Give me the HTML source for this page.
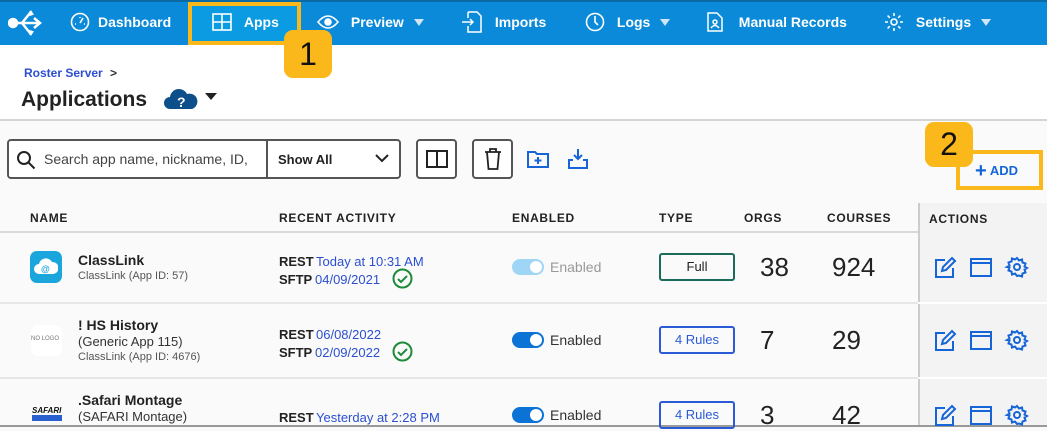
<!DOCTYPE html>
<html><head><meta charset="utf-8"><style>
*{margin:0;padding:0;box-sizing:border-box}
body{width:1047px;height:427px;overflow:hidden;background:#fafafa;font-family:"Liberation Sans",sans-serif;position:relative;color:#222}
.a{position:absolute}
.nav{left:0;top:0;width:1047px;height:45px;background:#0a8ad8;border-top:2px solid #0b6aa6}
.ni{position:absolute;top:11px;height:22px;color:#fff;font-weight:bold;font-size:14px;display:flex;align-items:center;gap:8px;line-height:22px}
.tri{display:inline-block;width:0;height:0;border-left:5px solid transparent;border-right:5px solid transparent;border-top:7px solid #cfe6f7;margin-left:2px}
.hdr{left:0;top:45px;width:1047px;height:76px;background:#fff;border-bottom:2px solid #d4d4d4}
.th{position:absolute;top:211px;font-size:12px;font-weight:bold;letter-spacing:.7px;color:#222}
.sep{position:absolute;left:0;width:918px;height:2px;background:#e6e6e6}
.nm{font-size:14px;font-weight:bold;color:#222}
.sub{font-size:11px;color:#555}
.lbl{font-size:13px;font-weight:bold;color:#222}
.dt{font-size:13px;color:#2b4fd0}
.tog{position:absolute;width:32px;height:16px;border-radius:8px;background:#0b72d6}
.tog:after{content:"";position:absolute;right:2px;top:2px;width:12px;height:12px;border-radius:50%;background:#fff}
.en{position:absolute;font-size:14px;color:#333}
.pill{position:absolute;width:76px;height:28px;border:2px solid #2b5ad6;border-radius:3px;font-size:13px;color:#2b5ad6;text-align:center;line-height:24px}
.num{position:absolute;font-size:26px;color:#222}
.badge{position:absolute;background:#fbb81b;border-radius:9px;font-size:32px;color:#111;text-align:center}
</style></head><body>
<div class="a nav"></div>
<svg class="a" style="left:8px;top:8px" width="36" height="30" viewBox="0 0 36 30" fill="none" stroke="#fff" stroke-width="2.5"><circle cx="5" cy="15" r="4" fill="#fff"/><path d="M8 15H32M26 10l6 5-6 5M14 15l8-10M14 15l8 10"/><path d="M22 3l2 3-3 1M22 27l2-3-3-1" /></svg>
<div class="a" style="left:188px;top:2px;width:113px;height:43px;border:4px solid #fbb81b;background:#0b9be2"></div>
<div class="ni" style="left:70px"><svg width="20" height="20" viewBox="0 0 20 20" fill="none" stroke="#fff" stroke-width="1.6"><circle cx="10" cy="10" r="8.5"/><path d="M10 11l3-5M5 12h1M14 12h1M10 5v1"/></svg>Dashboard</div>
<div class="ni" style="left:212px"><svg width="20" height="18" viewBox="0 0 20 18" fill="none" stroke="#fff" stroke-width="1.6"><rect x="1" y="1" width="18" height="16"/><path d="M10 1v16M1 9h18"/></svg>&nbsp;Apps</div>
<div class="ni" style="left:317px"><svg width="22" height="16" viewBox="0 0 22 16" fill="none" stroke="#fff" stroke-width="1.6"><path d="M1 8q10-12 20 0q-10 12-20 0z"/><circle cx="11" cy="8" r="3" fill="#fff"/></svg>&nbsp;Preview<span class="tri"></span></div>
<div class="ni" style="left:461px"><svg width="22" height="22" viewBox="0 0 22 22" fill="none" stroke="#fff" stroke-width="1.5"><path d="M7 1h9l4 4v16H7v-6M7 7V1M1 11h11M9 8l3 3-3 3"/></svg>&nbsp;Imports</div>
<div class="ni" style="left:585px"><svg width="20" height="20" viewBox="0 0 20 20" fill="none" stroke="#fff" stroke-width="1.6"><circle cx="10" cy="10" r="8.5"/><path d="M10 4v6l3 3"/></svg>&nbsp;Logs<span class="tri"></span></div>
<div class="ni" style="left:707px"><svg width="16" height="20" viewBox="0 0 16 20" fill="none" stroke="#fff" stroke-width="1.5"><path d="M1 1h9l5 5v13H1z"/><circle cx="8" cy="10" r="2"/><path d="M4 16q4-5 8 0"/></svg>&nbsp;&nbsp;Manual Records</div>
<div class="ni" style="left:884px"><svg width="20" height="20" viewBox="0 0 20 20" fill="none" stroke="#fff" stroke-width="1.6"><circle cx="10" cy="10" r="3"/><path d="M10 1v3M10 16v3M1 10h3M16 10h3M3.6 3.6l2.2 2.2M14.2 14.2l2.2 2.2M3.6 16.4l2.2-2.2M14.2 5.8l2.2-2.2"/></svg>&nbsp;Settings<span class="tri"></span></div>
<div class="a hdr"></div>
<div class="badge" style="left:284px;top:30px;width:48px;height:48px;line-height:48px">1</div>
<div class="a" style="left:24px;top:66px;font-size:12px;font-weight:bold;color:#2b4fd0">Roster Server <span style="color:#333;margin-left:4px">&gt;</span></div>
<div class="a" style="left:21px;top:88px;font-size:21px;font-weight:bold;color:#222">Applications</div>
<svg class="a" style="left:164px;top:87px" width="34" height="24" viewBox="0 0 34 24"><path d="M6 22a6 6 0 010-12 9 9 0 0117-3 7 7 0 015 15z" fill="#0d4f8a"/><text x="13" y="20" font-size="14" font-weight="bold" fill="#fff" font-family="Liberation Sans">?</text></svg>
<div class="a" style="left:205px;top:93px;width:0;height:0;border-left:6px solid transparent;border-right:6px solid transparent;border-top:7px solid #222"></div>
<div class="a" style="left:7px;top:139px;width:394px;height:40px;border:2px solid #555;border-radius:4px;background:#fff"></div>
<div class="a" style="left:266px;top:140px;width:2px;height:38px;background:#555"></div>
<svg class="a" style="left:16px;top:150px" width="20" height="20" viewBox="0 0 20 20" fill="none" stroke="#222" stroke-width="2"><circle cx="8" cy="8" r="6"/><path d="M12.5 12.5l6 6"/></svg>
<div class="a" style="left:44px;top:151px;font-size:14px;color:#444">Search app name, nickname, ID,</div>
<div class="a" style="left:278px;top:152px;font-size:13px;font-weight:bold;color:#222">Show All</div>
<svg class="a" style="left:375px;top:154px" width="14" height="9" viewBox="0 0 14 9" fill="none" stroke="#222" stroke-width="2"><path d="M1 1l6 6 6-6"/></svg>
<div class="a" style="left:416px;top:139px;width:41px;height:40px;border:2px solid #555;border-radius:4px;background:#fff"></div>
<svg class="a" style="left:426px;top:150px" width="22" height="18" viewBox="0 0 22 18" fill="none" stroke="#222" stroke-width="2"><rect x="1" y="1" width="20" height="16"/><path d="M11 1v16"/></svg>
<div class="a" style="left:472px;top:139px;width:41px;height:40px;border:2px solid #555;border-radius:4px;background:#fff"></div>
<svg class="a" style="left:484px;top:148px" width="18" height="22" viewBox="0 0 18 22" fill="none" stroke="#222" stroke-width="1.8"><path d="M1 4h16M6 4V1h6v3M3 4l1.5 17h9L15 4"/></svg>
<svg class="a" style="left:527px;top:150px" width="22" height="18" viewBox="0 0 22 18" fill="none" stroke="#1565d8" stroke-width="2"><path d="M1 2h7l2 2h11v13H1z"/><path d="M11 7v7M7.5 10.5h7"/></svg>
<svg class="a" style="left:567px;top:148px" width="22" height="22" viewBox="0 0 22 22" fill="none" stroke="#1565d8" stroke-width="2"><path d="M11 1v10M7 7l4 4 4-4M6 12H2v8h18v-8h-4"/></svg>
<div class="a" style="left:956px;top:150px;width:87px;height:40px;border:4px solid #fbb81b"></div>
<div class="a" style="left:975px;top:160px;font-size:13px;font-weight:bold;color:#1565d8"><span style="font-size:20px;vertical-align:-2px">+</span> ADD</div>
<div class="badge" style="left:925px;top:122px;width:48px;height:45px;line-height:45px">2</div>
<div class="a" style="left:918px;top:203px;width:129px;height:224px;background:#f3f3f3;border-left:2px solid #ccc"></div>
<div class="a" style="left:918px;top:302px;width:129px;height:2px;background:#fff"></div>
<div class="a" style="left:918px;top:377px;width:129px;height:2px;background:#fff"></div>
<div class="th" style="left:30px">NAME</div>
<div class="th" style="left:279px">RECENT ACTIVITY</div>
<div class="th" style="left:512px">ENABLED</div>
<div class="th" style="left:659px">TYPE</div>
<div class="th" style="left:744px">ORGS</div>
<div class="th" style="left:827px">COURSES</div>
<div class="th" style="left:929px;top:212px">ACTIONS</div>
<div class="sep" style="top:231px;background:#d8d8d8"></div>
<div class="sep" style="top:302px"></div>
<div class="sep" style="top:377px"></div>
<div class="a" style="left:0;top:425px;width:1047px;height:2px;background:#999"></div>
<!-- row1 -->
<div class="a" style="left:30px;top:251px;width:32px;height:32px;border-radius:7px;background:#1aa6dc"></div>
<svg class="a" style="left:34px;top:257px" width="24" height="20" viewBox="0 0 24 20"><path d="M5 17a5 5 0 010-10 7 7 0 0113-2 6 6 0 011 12z" fill="#fff"/><text x="7" y="15" font-size="9" fill="#1aa6dc" font-weight="bold">@</text></svg>
<div class="a nm" style="left:78px;top:252px">ClassLink</div>
<div class="a sub" style="left:78px;top:270px">ClassLink (App ID: 57)</div>
<div class="a lbl" style="left:279px;top:254px">REST</div><div class="a dt" style="left:316px;top:254px">Today at 10:31 AM</div>
<div class="a lbl" style="left:279px;top:272px">SFTP</div><div class="a dt" style="left:315px;top:272px">04/09/2021</div>
<svg class="a" style="left:392px;top:268px" width="21" height="21" viewBox="0 0 21 21" fill="none" stroke="#1f8a3a" stroke-width="2"><circle cx="10.5" cy="10.5" r="9"/><path d="M6 11l3 3 6-6"/></svg>
<div class="tog" style="left:512px;top:259px;background:#9fd6f5"></div>
<div class="en" style="left:550px;top:259px;color:#999">Enabled</div>
<div class="pill" style="left:659px;top:253px;border-color:#1c6b5a;color:#222">Full</div>
<div class="num" style="left:760px;top:252px">38</div>
<div class="num" style="left:832px;top:252px">924</div>
<!-- row2 -->
<div class="a" style="left:31px;top:325px;width:31px;height:31px;border-radius:7px;background:#fff"></div>
<div class="a" style="left:31px;top:336px;font-size:6px;color:#777">NO LOGO</div>
<div class="a nm" style="left:78px;top:317px">! HS History</div>
<div class="a" style="left:78px;top:334px;font-size:13px;color:#333">(Generic App 115)</div>
<div class="a sub" style="left:78px;top:351px">ClassLink (App ID: 4676)</div>
<div class="a lbl" style="left:279px;top:327px">REST</div><div class="a dt" style="left:316px;top:327px">06/08/2022</div>
<div class="a lbl" style="left:279px;top:345px">SFTP</div><div class="a dt" style="left:315px;top:345px">02/09/2022</div>
<svg class="a" style="left:392px;top:341px" width="21" height="21" viewBox="0 0 21 21" fill="none" stroke="#1f8a3a" stroke-width="2"><circle cx="10.5" cy="10.5" r="9"/><path d="M6 11l3 3 6-6"/></svg>
<div class="tog" style="left:512px;top:332px"></div>
<div class="en" style="left:550px;top:332px">Enabled</div>
<div class="pill" style="left:659px;top:326px">4 Rules</div>
<div class="num" style="left:760px;top:325px">7</div>
<div class="num" style="left:832px;top:325px">29</div>
<!-- row3 -->
<div class="a" style="left:32px;top:406px;font-size:8px;font-weight:bold;font-style:italic;color:#111">SAFARI</div>
<div class="a" style="left:32px;top:415px;width:30px;height:6px;background:#2a5fcf"></div>
<div class="a nm" style="left:78px;top:392px">.Safari Montage</div>
<div class="a" style="left:78px;top:409px;font-size:13px;color:#333">(SAFARI Montage)</div>
<div class="a lbl" style="left:279px;top:410px">REST</div><div class="a dt" style="left:316px;top:410px">Yesterday at 2:28 PM</div>
<div class="tog" style="left:512px;top:407px"></div>
<div class="en" style="left:550px;top:407px">Enabled</div>
<div class="pill" style="left:659px;top:401px">4 Rules</div>
<div class="num" style="left:760px;top:400px">3</div>
<div class="num" style="left:832px;top:400px">42</div>
<!-- actions -->
<svg width="0" height="0" style="position:absolute"><defs>
<g id="ic" fill="none" stroke="#1565d8" stroke-width="2"><path d="M11 4H2v17h17v-9M8 15l1-4 9-9 3 3-9 9z"/><rect x="37" y="3" width="20" height="17"/><path d="M37 7h20"/><circle cx="83" cy="11" r="3"/><path d="M83 2l2 2.5 3-1 .5 3 3 1-1 3 2.5 1.5-2.5 1.5 1 3-3 1-.5 3-3-1L83 20l-2-2.5-3 1-.5-3-3-1 1-3L73 11l2.5-1.5-1-3 3-1 .5-3 3 1z"/></g></defs></svg>
<svg class="a" style="left:934px;top:256px" width="100" height="24"><use href="#ic"/></svg>
<svg class="a" style="left:934px;top:329px" width="100" height="24"><use href="#ic"/></svg>
<svg class="a" style="left:934px;top:404px" width="100" height="24"><use href="#ic"/></svg>
</body></html>
